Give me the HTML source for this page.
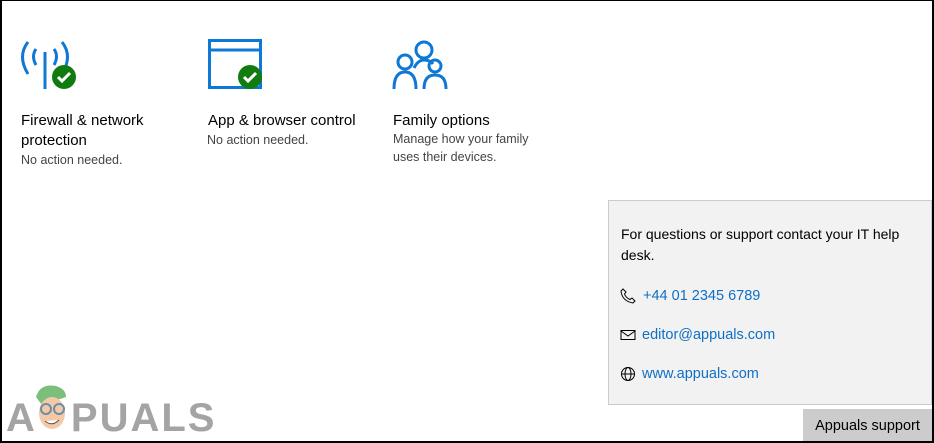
<!DOCTYPE html>
<html><head><style>
body{margin:0;width:934px;height:443px;overflow:hidden;background:#fff;font-family:"Liberation Sans",sans-serif;position:relative}
.frame{position:absolute;left:0;top:0;width:930px;height:440px;border:2px solid #000;border-top:1px solid #000}
.t{position:absolute;font-size:15px;color:#000;line-height:20px}
.s{position:absolute;font-size:12.5px;color:#444;line-height:18px}
.panel{position:absolute;left:608px;top:200px;width:324px;height:205px;background:#f2f2f2;border:1px solid #ccc;box-sizing:border-box}
.p{position:absolute;font-size:14px;line-height:21px;color:#000}
.l{position:absolute;font-size:14.5px;color:#0f6fc6}
.btn{position:absolute;left:803px;top:409px;width:129px;height:32px;background:#ccc;font-size:14.5px;line-height:34px;text-align:center;color:#000}
</style></head><body>
<svg style="position:absolute;left:18px;top:38px" width="62" height="52" viewBox="0 0 62 52">
<g fill="none" stroke="#0f78d4" stroke-width="3">
<path d="M10 4 Q-1 18 10 36"/><path d="M18 11 Q13 18 18 27"/>
<path d="M44 4 Q55 18 44 36"/><path d="M36 11 Q41 18 36 27"/>
<line x1="27" y1="14" x2="27" y2="51"/></g>
<circle cx="46" cy="39" r="12" fill="#107c10"/>
<path d="M40 39 l4 4 l8 -8" fill="none" stroke="#fff" stroke-width="3"/>
</svg>
<svg style="position:absolute;left:206px;top:38px" width="60" height="52" viewBox="0 0 60 52">
<g fill="none" stroke="#0f78d4" stroke-width="3"><rect x="3.5" y="2.5" width="51" height="47"/><line x1="3" y1="12" x2="55" y2="12"/></g>
<circle cx="44" cy="39" r="12" fill="#107c10"/>
<path d="M38 39 l4 4 l8 -8" fill="none" stroke="#fff" stroke-width="3"/>
</svg>
<svg style="position:absolute;left:392px;top:40px" width="58" height="50" viewBox="0 0 58 50">
<g fill="none" stroke="#0f78d4" stroke-width="3">
<circle cx="32" cy="10" r="8"/><circle cx="13" cy="22" r="7"/><circle cx="43" cy="26" r="6"/>
<path d="M2 49 Q2 32 13 32 Q24 32 24 49"/><path d="M32 49 Q32 35 43 35 Q54 35 54 49"/>
<path d="M22 28 Q26 20 32 20 Q38 20 41 24"/></g>
</svg>
<div class="t" style="left:21px;top:111px">Firewall &amp; network<br>protection</div>
<div class="s" style="left:21px;top:151px">No action needed.</div>
<div class="t" style="left:208px;top:111px">App &amp; browser control</div>
<div class="s" style="left:207px;top:131px">No action needed.</div>
<div class="t" style="left:393px;top:111px">Family options</div>
<div class="s" style="left:393px;top:130px;line-height:18px">Manage how your family<br>uses their devices.</div>
<div class="panel"></div>
<div class="p" style="left:621px;top:224px">For questions or support contact your IT help<br>desk.</div>
<svg style="position:absolute;left:620px;top:288px" width="16" height="16" viewBox="0 0 16 16"><path d="M3 1 L6 4 L4.5 6 Q6 10 10 11.5 L12 10 L15 13 L13 15 Q2 13 1 3 Z" fill="none" stroke="#000" stroke-width="1"/></svg>
<div class="l" style="left:643px;top:288px">+44 01 2345 6789</div>
<svg style="position:absolute;left:620px;top:329px" width="16" height="12" viewBox="0 0 16 12"><rect x="1" y="1.5" width="14" height="9" fill="none" stroke="#000"/><path d="M1 2 L8 7 L15 2" fill="none" stroke="#000"/></svg>
<div class="l" style="left:642px;top:327px">editor@appuals.com</div>
<svg style="position:absolute;left:620px;top:366px" width="16" height="16" viewBox="0 0 16 16"><g fill="none" stroke="#000"><circle cx="8" cy="8" r="6.5"/><ellipse cx="8" cy="8" rx="3" ry="6.5"/><line x1="1.5" y1="8" x2="14.5" y2="8"/></g></svg>
<div class="l" style="left:642px;top:366px">www.appuals.com</div>
<div class="btn">Appuals support</div>
<div style="position:absolute;left:6px;top:396px;font-size:40px;font-weight:bold;color:#a4a4a4;letter-spacing:2px">A<span style="display:inline-block;width:34px"></span>PUALS</div>
<svg style="position:absolute;left:30px;top:383px" width="42" height="58" viewBox="0 0 42 58"><path d="M6 14 Q10 0 26 3 Q36 6 36 14 L12 22 Z" fill="#7cbf7a"/><ellipse cx="22" cy="30" rx="13" ry="16" fill="#f3c9a8"/><circle cx="16" cy="26" r="5" fill="none" stroke="#6b8fa6" stroke-width="2"/><circle cx="29" cy="26" r="5" fill="none" stroke="#6b8fa6" stroke-width="2"/><path d="M15 38 Q22 44 29 37" fill="#fff" stroke="#555"/></svg>
<div class="frame"></div>
</body></html>
